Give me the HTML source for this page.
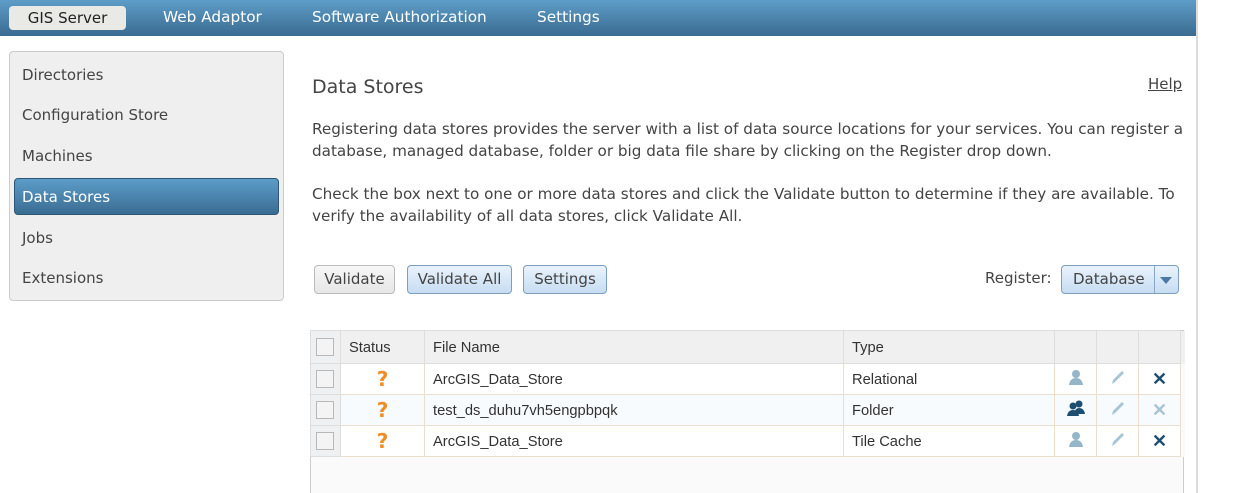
<!DOCTYPE html>
<html><head><style>
*{box-sizing:border-box;margin:0;padding:0}
body{width:1242px;height:493px;overflow:hidden;background:#fff;font-family:"DejaVu Sans",Verdana,sans-serif;color:#444;position:relative}
.top{position:absolute;left:0;top:0;width:1197px;height:36px;background:linear-gradient(#5d9dc8,#3b6b90)}
.top span{position:absolute;top:8px;color:#fff;font-size:15.3px}
.gis{position:absolute;left:9px;top:6px;width:117px;height:24px;background:#e9e9e6;border-radius:4px;color:#222!important;font-size:15px;text-align:center;line-height:24px}
.vline{position:absolute;left:1196px;top:0;width:2px;height:493px;background:#ddd}
.side{position:absolute;left:9px;top:51px;width:275px;height:250px;background:#efefef;border:1px solid #ccc;border-radius:4px}
.sel{position:absolute;left:14px;top:178px;width:265px;height:37px;background:linear-gradient(#5b9dc9,#3b6c92);border-radius:4px;border:1px solid #2e5675}
.t{position:absolute;font-size:15px}
.btn{position:absolute;top:265px;height:29px;border:1px solid #bbb;border-radius:4px;background:linear-gradient(#f7f7f7,#e6e6e6);font-size:15px;line-height:27px;text-align:center;color:#444}
.bb{border-color:#7c9fc0;background:linear-gradient(#e9f2fb,#c7ddf3)}
table{position:absolute;left:310px;top:330px;width:874px;table-layout:fixed;border-collapse:collapse;font-family:"Liberation Sans",Arial,sans-serif;font-size:14.7px;color:#333}
.tw{position:absolute;left:310px;top:330px;width:874px;height:163px;border:1px solid #ccc;border-bottom:none;background:#fafafa}
td{height:31px;border:1px solid #eadfcf;padding-left:8px;background:#fff;padding-top:1px}
tr.h td{background:#f0f0f0;height:33px;border-color:#ddd}
tr.alt td{background:#f7fbfe}
td.cb{background:#eef0f2!important;padding:0 0 0 5px;border-color:#ddd}
.box{width:18px;height:18px;border:1px solid #b8b8b8;background:#f4f4f4}
.q{color:#f08c28;font-weight:bold;text-align:center;padding:0;font-size:20px;font-family:"DejaVu Sans",sans-serif}
.ic{text-align:center;padding:0}
</style></head><body>
<div class="top"><div class="gis">GIS Server</div><span style="left:163px">Web Adaptor</span><span style="left:312px">Software Authorization</span><span style="left:537px">Settings</span></div>
<div class="vline"></div>
<div class="side"></div>
<div class="sel"></div>
<div class="t" style="left:22px;top:66px">Directories</div>
<div class="t" style="left:22px;top:106px">Configuration Store</div>
<div class="t" style="left:22px;top:147px">Machines</div>
<div class="t" style="left:22px;top:188px;color:#fff">Data Stores</div>
<div class="t" style="left:22px;top:229px">Jobs</div>
<div class="t" style="left:22px;top:269px">Extensions</div>
<div class="t" style="left:312px;top:76px;font-size:19px;color:#444">Data Stores</div>
<div class="t" style="left:1148px;top:75px;text-decoration:underline">Help</div>
<div class="t" style="left:312px;top:118px;width:880px;line-height:22px;font-size:15.2px">Registering data stores provides the server with a list of data source locations for your services. You can register a database, managed database, folder or big data file share by clicking on the Register drop down.</div>
<div class="t" style="left:312px;top:183px;width:880px;line-height:22px;font-size:15.2px">Check the box next to one or more data stores and click the Validate button to determine if they are available. To verify the availability of all data stores, click Validate All.</div>
<div class="btn" style="left:314px;width:81px">Validate</div>
<div class="btn bb" style="left:407px;width:105px">Validate All</div>
<div class="btn bb" style="left:523px;width:84px">Settings</div>
<div class="t" style="left:985px;top:269px">Register:</div>
<div class="btn bb" style="left:1061px;width:118px;text-align:left;padding-left:11px">Database<span style="position:absolute;left:92px;top:0;height:27px;border-left:1px solid #8aa8c5"></span><span style="position:absolute;left:98px;top:11px;border:6px solid transparent;border-top:7px solid #4a7aa4;border-bottom:0"></span></div>
<div class="tw"></div>
<table>
<colgroup><col style="width:30px"><col style="width:84px"><col style="width:419px"><col style="width:211px"><col style="width:42px"><col style="width:42px"><col style="width:42px"><col style="width:4px"></colgroup>
<tr class="h"><td class="cb"><div class="box"></div></td><td>Status</td><td>File Name</td><td>Type</td><td class="ic"></td><td class="ic"></td><td class="ic"></td><td style="padding:0;border:none;background:#f0f0f0"></td></tr>
<tr><td class="cb"><div class="box"></div></td><td class="q">?</td><td>ArcGIS_Data_Store</td><td>Relational</td><td class="ic"><svg width="18" height="16"><circle cx="9" cy="5" r="4" fill="#94b6c8"/><path d="M2 16 Q3 9 9 9 Q15 9 16 16Z" fill="#94b6c8"/></svg></td><td class="ic"><svg width="16" height="16"><path d="M2 15 L3 11 L12 2 L14 4 L5 13Z" fill="#a8c4d4"/></svg></td><td class="ic" style="color:#1d4e72;font-weight:bold;font-size:18px">✕</td><td style="border:none;background:#fafafa"></td></tr>
<tr class="alt"><td class="cb"><div class="box"></div></td><td class="q">?</td><td>test_ds_duhu7vh5engpbpqk</td><td>Folder</td><td class="ic"><svg width="22" height="16"><circle cx="14" cy="4" r="3.5" fill="#1d4e72"/><path d="M9 14 Q10 8 14 8 Q19 8 20 14Z" fill="#1d4e72"/><circle cx="8" cy="6" r="3.5" fill="#1d4e72"/><path d="M2 16 Q3 10 8 10 Q13 10 14 16Z" fill="#1d4e72"/></svg></td><td class="ic"><svg width="16" height="16"><path d="M2 15 L3 11 L12 2 L14 4 L5 13Z" fill="#a8c4d4"/></svg></td><td class="ic" style="color:#a8c4d4;font-weight:bold;font-size:18px">✕</td><td style="border:none;background:#fafafa"></td></tr>
<tr><td class="cb"><div class="box"></div></td><td class="q">?</td><td>ArcGIS_Data_Store</td><td>Tile Cache</td><td class="ic"><svg width="18" height="16"><circle cx="9" cy="5" r="4" fill="#94b6c8"/><path d="M2 16 Q3 9 9 9 Q15 9 16 16Z" fill="#94b6c8"/></svg></td><td class="ic"><svg width="16" height="16"><path d="M2 15 L3 11 L12 2 L14 4 L5 13Z" fill="#a8c4d4"/></svg></td><td class="ic" style="color:#1d4e72;font-weight:bold;font-size:18px">✕</td><td style="border:none;background:#fafafa"></td></tr>
</table>
</body></html>
